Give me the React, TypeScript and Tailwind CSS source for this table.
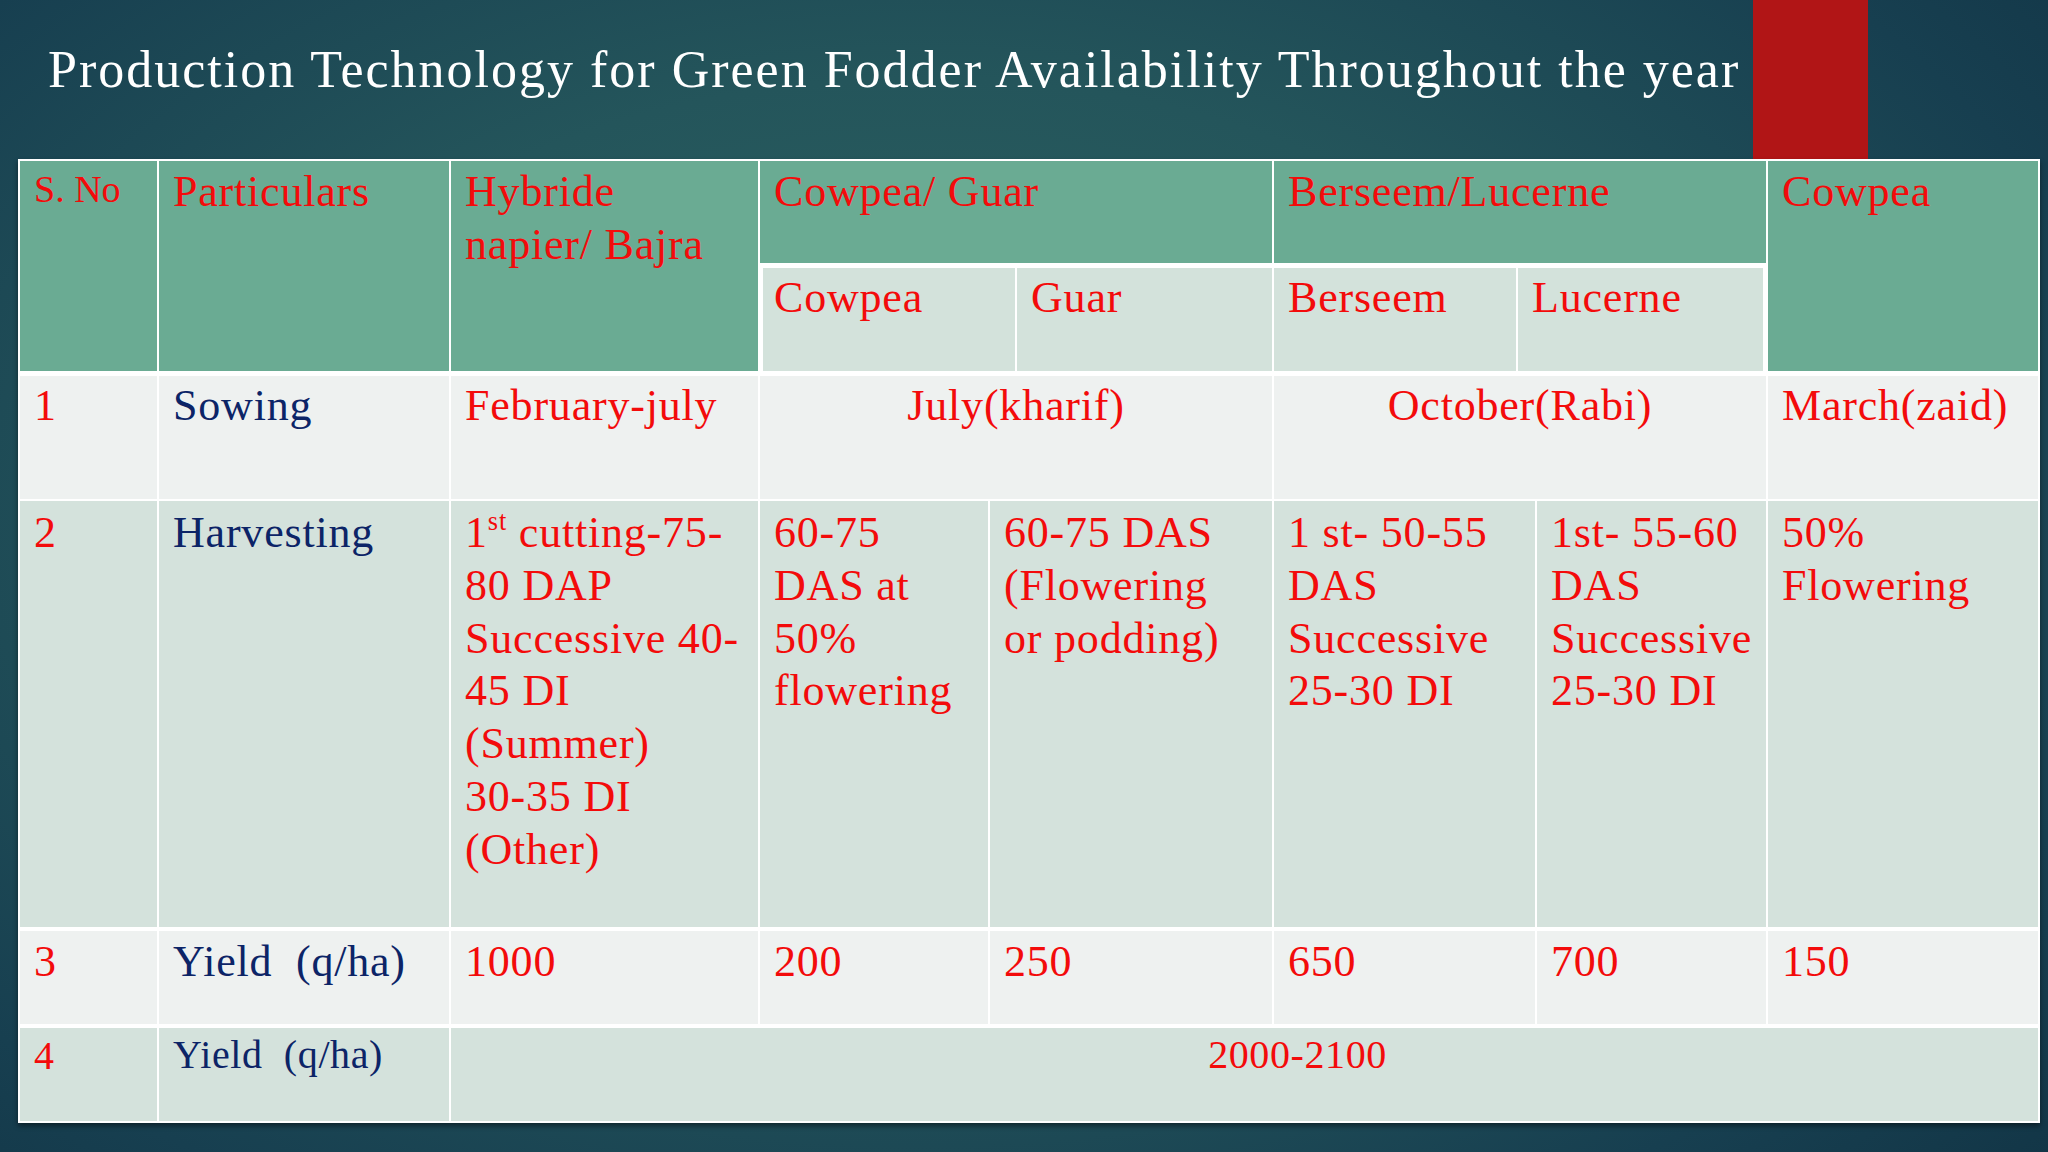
import type { ReactNode } from 'react'

// Slide colours
const RED = 'text-[#f30b0b]'
const NAVY = 'text-[#0c2467]'

function Cell({ className, children }: { className: string; children?: ReactNode }) {
  return (
    <div className={'border-l-2 border-t-2 border-white px-[14px] leading-[1.2] ' + className}>
      {children}
    </div>
  )
}

function Lines({ lines }: { lines: ReactNode[] }) {
  return (
    <>
      {lines.map((l, i) => (
        <span key={i} className="block whitespace-nowrap">{l}</span>
      ))}
    </>
  )
}

export default function App() {
  const head = 'bg-[#6aab93] pt-[5px] text-[44px] tracking-[0.8px] ' + RED
  const sub = 'bg-[#d3e2db] border-t-[5px] pt-[4px] text-[44px] tracking-[0.8px] ' + RED
  const r1 = 'bg-[#eef1f0] border-t-[5px] pt-[4px] text-[44px] tracking-[0.8px] '
  const r2 = 'bg-[#d4e2dc] pt-[6px] text-[44px] tracking-[0.8px] '
  const r3 = 'bg-[#eef1f0] border-t-4 pt-[5px] text-[44px] tracking-[0.8px] '
  const r4 = 'bg-[#d4e2dc] border-t-4 pt-[3px] text-[40px] tracking-[0.6px] '

  return (
    <div className="flex h-[1152px] w-[2048px] flex-col overflow-hidden bg-[radial-gradient(ellipse_75%_85%_at_45%_45%,#2e6562_0%,#24555b_45%,#173f50_80%,#123546_100%)] font-['Liberation_Serif',serif]">
      {/* Title band */}
      <div className="flex h-[159px] shrink-0">
        <div className="w-[1753px] pl-[48px] pt-[39px] text-[52px] leading-[1.2] tracking-[2px] whitespace-nowrap text-white">
          Production Technology for Green Fodder Availability Throughout the year
        </div>
        <div className="h-full w-[115px] bg-[#b11516]" />
      </div>

      {/* Table */}
      <div className="ml-[18px] grid w-[2022px] grid-cols-[139px_292px_309px_230px_27px_257px_244px_19px_231px_272px] grid-rows-[104px_108px_128px_428px_97px_97px] border-r-2 border-b-2 border-white shadow-[0_3px_5px_rgba(0,0,0,0.45)]">
        {/* Header */}
        <Cell className={'col-start-1 row-start-1 row-span-2 bg-[#6aab93] pt-[6px] text-[38px] ' + RED}>S. No</Cell>
        <Cell className={'col-start-2 row-start-1 row-span-2 ' + head}>Particulars</Cell>
        <Cell className={'col-start-3 row-start-1 row-span-2 ' + head}>
          <Lines lines={['Hybride', 'napier/ Bajra']} />
        </Cell>
        <Cell className={'col-start-4 col-span-3 row-start-1 ' + head}>Cowpea/ Guar</Cell>
        <Cell className={'col-start-7 col-span-3 row-start-1 ' + head}>Berseem/Lucerne</Cell>
        <Cell className={'col-start-10 row-start-1 row-span-2 ' + head}>Cowpea</Cell>

        <Cell className={'col-start-4 col-span-2 row-start-2 border-l-[5px] pl-[11px] ' + sub}>Cowpea</Cell>
        <Cell className={'col-start-6 row-start-2 ' + sub}>Guar</Cell>
        <Cell className={'col-start-7 row-start-2 ' + sub}>Berseem</Cell>
        <Cell className={'col-start-8 col-span-2 row-start-2 border-r-[3px] ' + sub}>Lucerne</Cell>

        {/* Row 1 */}
        <Cell className={'col-start-1 row-start-3 ' + r1 + 'pt-[3px] text-[37px] ' + RED}>1</Cell>
        <Cell className={'col-start-2 row-start-3 ' + r1 + NAVY}>Sowing</Cell>
        <Cell className={'col-start-3 row-start-3 ' + r1 + RED}>February-july</Cell>
        <Cell className={'col-start-4 col-span-3 row-start-3 text-center ' + r1 + RED}>July(kharif)</Cell>
        <Cell className={'col-start-7 col-span-3 row-start-3 text-center ' + r1 + RED}>October(Rabi)</Cell>
        <Cell className={'col-start-10 row-start-3 ' + r1 + RED}>March(zaid)</Cell>

        {/* Row 2 */}
        <Cell className={'col-start-1 row-start-4 ' + r2 + 'pt-[5px] text-[37px] ' + RED}>2</Cell>
        <Cell className={'col-start-2 row-start-4 ' + r2 + NAVY}>Harvesting</Cell>
        <Cell className={'col-start-3 row-start-4 ' + r2 + RED}>
          <Lines
            lines={[
              <>1<sup className="text-[0.6em] -top-[0.65em]">st</sup> cutting-75-</>,
              '80 DAP',
              'Successive 40-',
              '45 DI',
              '(Summer)',
              '30-35 DI',
              '(Other)',
            ]}
          />
        </Cell>
        <Cell className={'col-start-4 row-start-4 ' + r2 + RED}>
          <Lines lines={['60-75', 'DAS at', '50%', 'flowering']} />
        </Cell>
        <Cell className={'col-start-5 col-span-2 row-start-4 ' + r2 + RED}>
          <Lines lines={['60-75 DAS', '(Flowering', 'or podding)']} />
        </Cell>
        <Cell className={'col-start-7 col-span-2 row-start-4 ' + r2 + RED}>
          <Lines lines={['1 st- 50-55', 'DAS', 'Successive', '25-30 DI']} />
        </Cell>
        <Cell className={'col-start-9 row-start-4 ' + r2 + RED}>
          <Lines lines={['1st- 55-60', 'DAS', 'Successive', '25-30 DI']} />
        </Cell>
        <Cell className={'col-start-10 row-start-4 ' + r2 + RED}>
          <Lines lines={['50%', 'Flowering']} />
        </Cell>

        {/* Row 3 */}
        <Cell className={'col-start-1 row-start-5 ' + r3 + 'pt-[5px] text-[37px] ' + RED}>3</Cell>
        <Cell className={'col-start-2 row-start-5 whitespace-pre ' + r3 + NAVY}>{'Yield  (q/ha)'}</Cell>
        <Cell className={'col-start-3 row-start-5 ' + r3 + RED}>1000</Cell>
        <Cell className={'col-start-4 row-start-5 ' + r3 + RED}>200</Cell>
        <Cell className={'col-start-5 col-span-2 row-start-5 ' + r3 + RED}>250</Cell>
        <Cell className={'col-start-7 col-span-2 row-start-5 ' + r3 + RED}>650</Cell>
        <Cell className={'col-start-9 row-start-5 ' + r3 + RED}>700</Cell>
        <Cell className={'col-start-10 row-start-5 ' + r3 + RED}>150</Cell>

        {/* Row 4 */}
        <Cell className={'col-start-1 row-start-6 ' + r4 + 'pt-[4px] text-[37px] ' + RED}>4</Cell>
        <Cell className={'col-start-2 row-start-6 whitespace-pre ' + r4 + NAVY}>{'Yield  (q/ha)'}</Cell>
        <Cell className={'col-start-3 col-span-8 row-start-6 pl-[120px] text-center ' + r4 + RED}>2000-2100</Cell>
      </div>
    </div>
  )
}
